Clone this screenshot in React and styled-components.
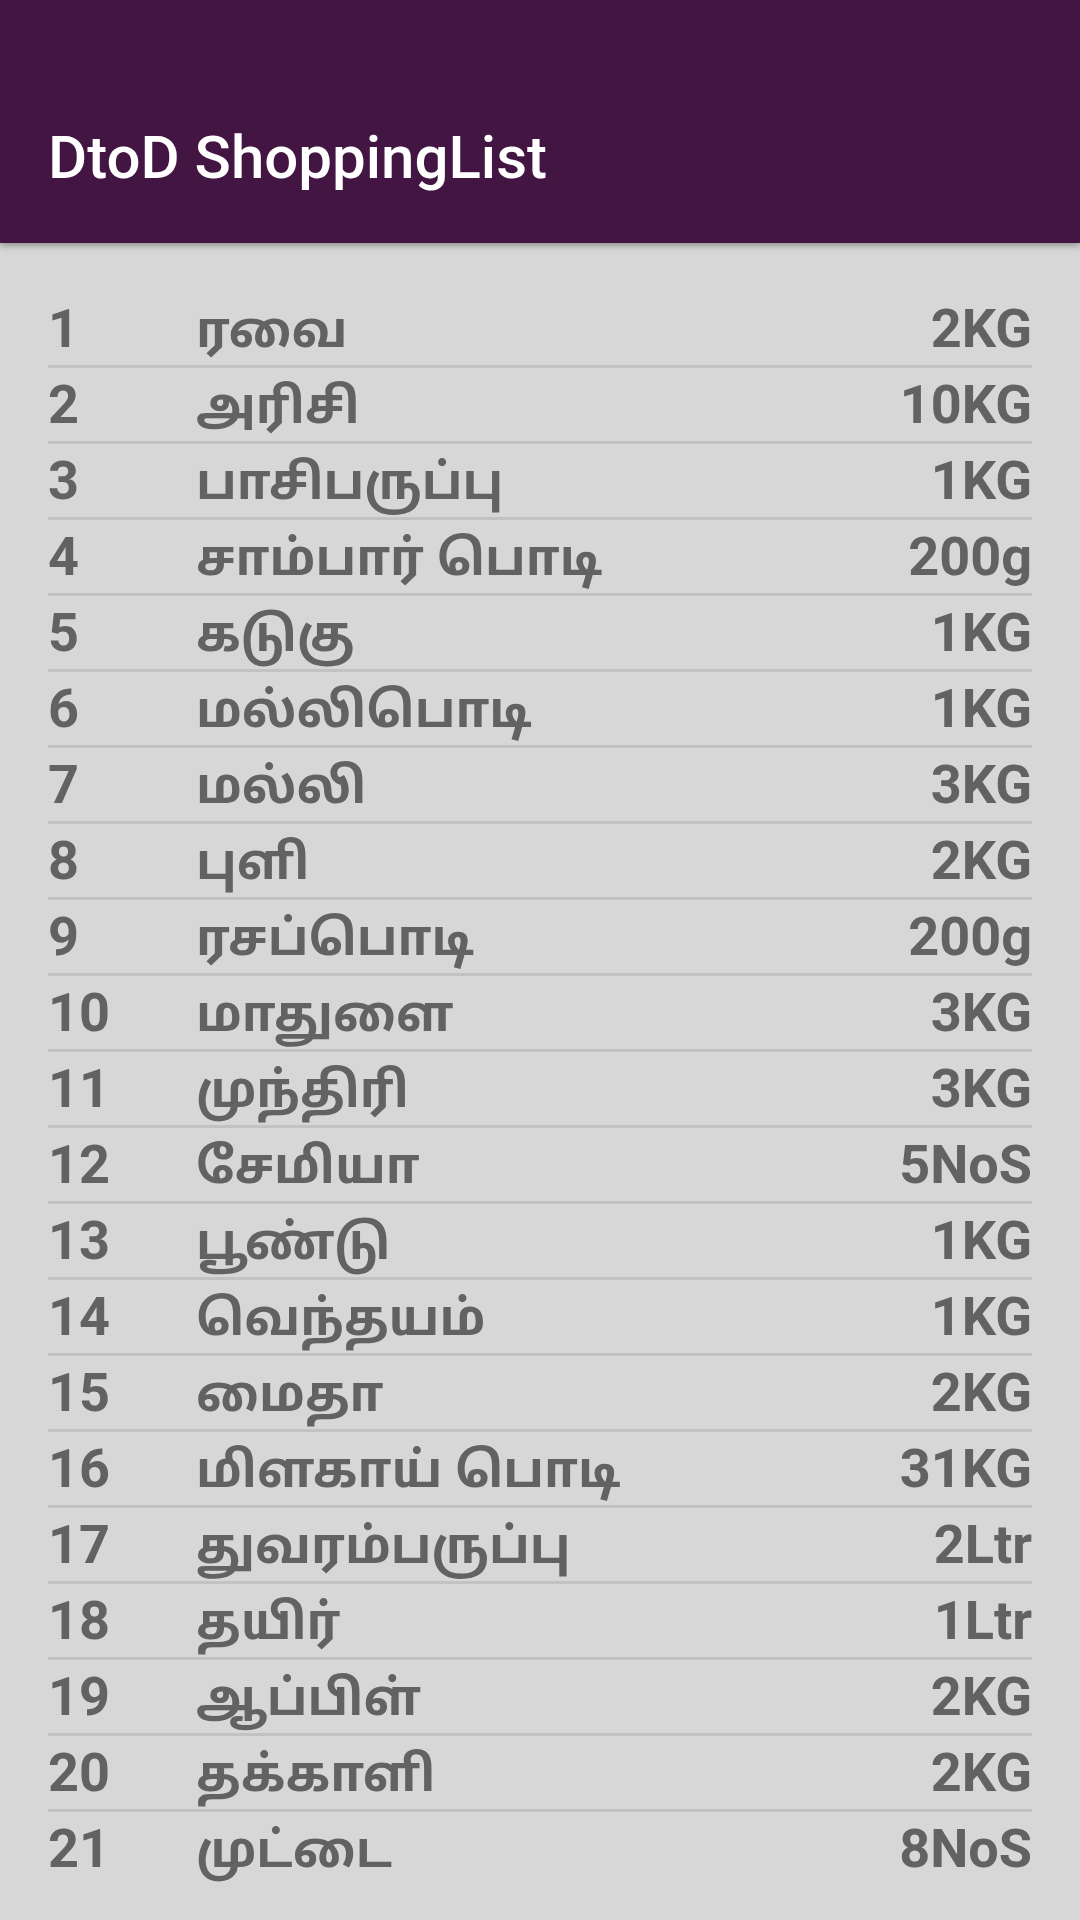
import React from 'react'
import styled, { createGlobalStyle } from 'styled-components'

const GlobalStyle = createGlobalStyle`
    html, body {
        margin: 0;
        padding: 0;
        background: #d7d7d7;
        font-family: Roboto, "Noto Sans Tamil", "Noto Sans", sans-serif;
    }
`

const Page = styled.div`
    width: 1080px;
    min-height: 1920px;
    background: #d7d7d7;
`

const Header = styled.header`
    height: 243px;
    background: #421542;
    box-shadow: 0 3px 6px rgba(0, 0, 0, 0.3);
    display: flex;
    align-items: flex-end;
    box-sizing: border-box;
    padding: 0 48px 0 48px;
`

const Title = styled.h1`
    margin: 0;
    height: 171px;
    display: flex;
    align-items: center;
    color: #ffffff;
    font-size: 60px;
    font-weight: 500;
`

const List = styled.ul`
    list-style: none;
    margin: 0;
    padding: 49px 48px 0 48px;
`

const Row = styled.li`
    display: grid;
    grid-template-columns: 148px 1fr auto;
    align-items: baseline;
    height: 73px;
    border-bottom: ${p => (p.last ? 'none' : '3px solid #c2c2c2')};
    color: #626262;
    font-size: 54px;
    font-weight: 700;
    line-height: 73px;
`

const Num = styled.span``

const Name = styled.span`
    font-family: "Noto Sans Tamil", "Noto Sans", Roboto, sans-serif;
    font-weight: 700;
    font-size: 49px;
`

const Qty = styled.span`
    text-align: right;
`

const items = [
    ['ரவை', '2KG'],
    ['அரிசி', '10KG'],
    ['பாசிபருப்பு', '1KG'],
    ['சாம்பார் பொடி', '200g'],
    ['கடுகு', '1KG'],
    ['மல்லிபொடி', '1KG'],
    ['மல்லி', '3KG'],
    ['புளி', '2KG'],
    ['ரசப்பொடி', '200g'],
    ['மாதுளை', '3KG'],
    ['முந்திரி', '3KG'],
    ['சேமியா', '5NoS'],
    ['பூண்டு', '1KG'],
    ['வெந்தயம்', '1KG'],
    ['மைதா', '2KG'],
    ['மிளகாய் பொடி', '31KG'],
    ['துவரம்பருப்பு', '2Ltr'],
    ['தயிர்', '1Ltr'],
    ['ஆப்பிள்', '2KG'],
    ['தக்காளி', '2KG'],
    ['முட்டை', '8NoS'],
]

const App = () => {
    return (
        <Page>
            <GlobalStyle />
            <Header>
                <Title>DtoD ShoppingList</Title>
            </Header>
            <List>
                {items.map(([name, qty], i) => (
                    <Row key={i} last={i === items.length - 1}>
                        <Num>{i + 1}</Num>
                        <Name>{name}</Name>
                        <Qty>{qty}</Qty>
                    </Row>
                ))}
            </List>
        </Page>
    )
}

export default App
